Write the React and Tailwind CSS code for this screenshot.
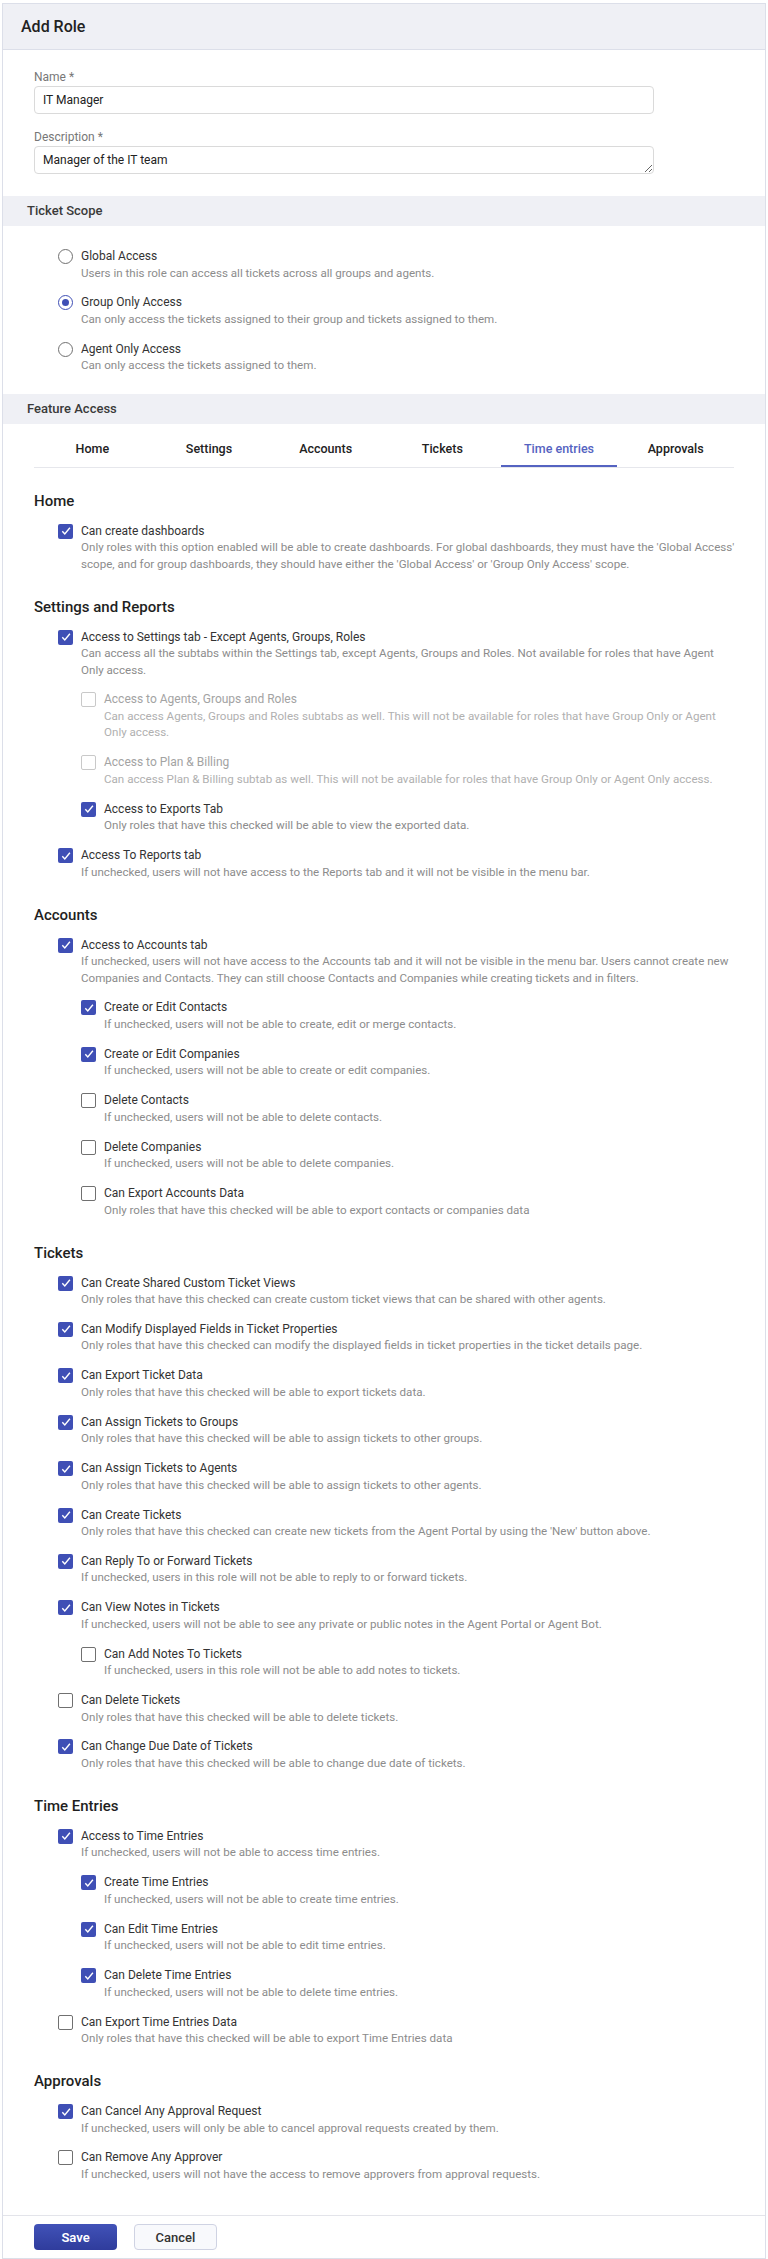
import { useState } from "react";

const tabs = ["Home", "Settings", "Accounts", "Tickets", "Time entries", "Approvals"];

const scopes = [
  {
    id: "global",
    label: "Global Access",
    desc: "Users in this role can access all tickets across all groups and agents.",
  },
  {
    id: "group",
    label: "Group Only Access",
    desc: "Can only access the tickets assigned to their group and tickets assigned to them.",
  },
  {
    id: "agent",
    label: "Agent Only Access",
    desc: "Can only access the tickets assigned to them.",
  },
];

const sections = [
  {
    title: "Home",
    items: [
      {
        label: "Can create dashboards",
        desc: "Only roles with this option enabled will be able to create dashboards. For global dashboards, they must have the 'Global Access' scope, and for group dashboards, they should have either the 'Global Access' or 'Group Only Access' scope.",
        checked: true,
      },
    ],
  },
  {
    title: "Settings and Reports",
    items: [
      {
        label: "Access to Settings tab - Except Agents, Groups, Roles",
        desc: "Can access all the subtabs within the Settings tab, except Agents, Groups and Roles. Not available for roles that have Agent Only access.",
        checked: true,
        children: [
          {
            label: "Access to Agents, Groups and Roles",
            desc: "Can access Agents, Groups and Roles subtabs as well. This will not be available for roles that have Group Only or Agent Only access.",
            disabled: true,
          },
          {
            label: "Access to Plan & Billing",
            desc: "Can access Plan & Billing subtab as well. This will not be available for roles that have Group Only or Agent Only access.",
            disabled: true,
          },
          {
            label: "Access to Exports Tab",
            desc: "Only roles that have this checked will be able to view the exported data.",
            checked: true,
          },
        ],
      },
      {
        label: "Access To Reports tab",
        desc: "If unchecked, users will not have access to the Reports tab and it will not be visible in the menu bar.",
        checked: true,
      },
    ],
  },
  {
    title: "Accounts",
    items: [
      {
        label: "Access to Accounts tab",
        desc: "If unchecked, users will not have access to the Accounts tab and it will not be visible in the menu bar. Users cannot create new Companies and Contacts. They can still choose Contacts and Companies while creating tickets and in filters.",
        checked: true,
        children: [
          {
            label: "Create or Edit Contacts",
            desc: "If unchecked, users will not be able to create, edit or merge contacts.",
            checked: true,
          },
          {
            label: "Create or Edit Companies",
            desc: "If unchecked, users will not be able to create or edit companies.",
            checked: true,
          },
          {
            label: "Delete Contacts",
            desc: "If unchecked, users will not be able to delete contacts.",
          },
          {
            label: "Delete Companies",
            desc: "If unchecked, users will not be able to delete companies.",
          },
          {
            label: "Can Export Accounts Data",
            desc: "Only roles that have this checked will be able to export contacts or companies data",
          },
        ],
      },
    ],
  },
  {
    title: "Tickets",
    items: [
      {
        label: "Can Create Shared Custom Ticket Views",
        desc: "Only roles that have this checked can create custom ticket views that can be shared with other agents.",
        checked: true,
      },
      {
        label: "Can Modify Displayed Fields in Ticket Properties",
        desc: "Only roles that have this checked can modify the displayed fields in ticket properties in the ticket details page.",
        checked: true,
      },
      {
        label: "Can Export Ticket Data",
        desc: "Only roles that have this checked will be able to export tickets data.",
        checked: true,
      },
      {
        label: "Can Assign Tickets to Groups",
        desc: "Only roles that have this checked will be able to assign tickets to other groups.",
        checked: true,
      },
      {
        label: "Can Assign Tickets to Agents",
        desc: "Only roles that have this checked will be able to assign tickets to other agents.",
        checked: true,
      },
      {
        label: "Can Create Tickets",
        desc: "Only roles that have this checked can create new tickets from the Agent Portal by using the 'New' button above.",
        checked: true,
      },
      {
        label: "Can Reply To or Forward Tickets",
        desc: "If unchecked, users in this role will not be able to reply to or forward tickets.",
        checked: true,
      },
      {
        label: "Can View Notes in Tickets",
        desc: "If unchecked, users will not be able to see any private or public notes in the Agent Portal or Agent Bot.",
        checked: true,
        children: [
          {
            label: "Can Add Notes To Tickets",
            desc: "If unchecked, users in this role will not be able to add notes to tickets.",
          },
        ],
      },
      {
        label: "Can Delete Tickets",
        desc: "Only roles that have this checked will be able to delete tickets.",
      },
      {
        label: "Can Change Due Date of Tickets",
        desc: "Only roles that have this checked will be able to change due date of tickets.",
        checked: true,
      },
    ],
  },
  {
    title: "Time Entries",
    items: [
      {
        label: "Access to Time Entries",
        desc: "If unchecked, users will not be able to access time entries.",
        checked: true,
        children: [
          {
            label: "Create Time Entries",
            desc: "If unchecked, users will not be able to create time entries.",
            checked: true,
          },
          {
            label: "Can Edit Time Entries",
            desc: "If unchecked, users will not be able to edit time entries.",
            checked: true,
          },
          {
            label: "Can Delete Time Entries",
            desc: "If unchecked, users will not be able to delete time entries.",
            checked: true,
          },
        ],
      },
      {
        label: "Can Export Time Entries Data",
        desc: "Only roles that have this checked will be able to export Time Entries data",
      },
    ],
  },
  {
    title: "Approvals",
    items: [
      {
        label: "Can Cancel Any Approval Request",
        desc: "If unchecked, users will only be able to cancel approval requests created by them.",
        checked: true,
      },
      {
        label: "Can Remove Any Approver",
        desc: "If unchecked, users will not have the access to remove approvers from approval requests.",
      },
    ],
  },
];

const CheckBox = ({ checked, disabled }) => (
  <span
    className={`mt-[1px] flex h-[15px] w-[15px] shrink-0 items-center justify-center rounded-[2px] ${
      checked
        ? "bg-[#3f4fb5]"
        : disabled
        ? "border-[1.5px] border-[#c9c9c9] bg-white"
        : "border-[1.5px] border-[#707070] bg-white"
    }`}
  >
    {checked && (
      <svg viewBox="0 0 12 12" className="h-[12px] w-[12px]">
        <path
          d="M2.3 6.2 L4.8 8.9 L9.9 2.8"
          fill="none"
          stroke="#ffffff"
          strokeWidth="1.4"
        />
      </svg>
    )}
  </span>
);

const Radio = ({ checked }) => (
  <span
    className={`mt-[1px] flex h-[15px] w-[15px] shrink-0 items-center justify-center rounded-full border-[1.5px] bg-white ${
      checked ? "border-[#3f4fb5]" : "border-[#707070]"
    }`}
  >
    {checked && <span className="h-[7px] w-[7px] rounded-full bg-[#3f4fb5]" />}
  </span>
);

const PermItem = ({ item }) => (
  <div className="flex gap-[8px]">
    <CheckBox checked={item.checked} disabled={item.disabled} />
    <div className="min-w-0 flex-1">
      <p
        className={`text-[12px] leading-[16.5px] ${
          item.disabled ? "text-[#a3a3a3]" : "text-[#333333]"
        }`}
      >
        {item.label}
      </p>
      <p
        className={`text-[11.6px] leading-[16.5px] ${
          item.disabled ? "text-[#b0b0b0]" : "text-[#8c8c8c]"
        }`}
      >
        {item.desc}
      </p>
      {item.children && (
        <div className="mt-[13.4px] flex flex-col gap-[13.4px]">
          {item.children.map((child) => (
            <PermItem key={child.label} item={child} />
          ))}
        </div>
      )}
    </div>
  </div>
);

const Band = ({ title }) => (
  <div className="flex h-[30px] items-center bg-[#eff0f5] px-[24px] text-[13px] font-medium text-[#3a3a3a]">
    {title}
  </div>
);

export default function App() {
  const [scope, setScope] = useState("group");
  const [tab] = useState("Time entries");

  return (
    <div
      className="min-h-screen bg-white pt-[3px]"
      style={{ fontFamily: "Roboto, 'Noto Sans', sans-serif" }}
    >
      <div className="mx-[2px] border border-[#dcdfe9]">
        <div className="flex h-[46px] items-center border-b border-[#dcdfe9] bg-[#eff0f5] px-[18px]">
          <h1 className="text-[16px] font-medium text-[#222222]">Add Role</h1>
        </div>

        <div className="px-[31px] pb-[22px] pt-[19px]">
          <div className="w-[620px]">
            <label className="mb-[1px] block text-[12px] leading-[16px] text-[#777777]">
              Name *
            </label>
            <input
              defaultValue="IT Manager"
              className="block h-[28px] w-full rounded-[4px] border border-[#dadada] px-[8px] text-[12px] text-[#222222] outline-none"
            />
            <label className="mb-[1px] mt-[15px] block text-[12px] leading-[16px] text-[#777777]">
              Description *
            </label>
            <textarea
              rows={1}
              defaultValue="Manager of the IT team"
              className="block h-[28px] w-full resize-y rounded-[4px] border border-[#dadada] px-[8px] py-[5px] text-[12px] leading-[16px] text-[#222222] outline-none"
            />
          </div>
        </div>

        <Band title="Ticket Scope" />

        <div className="flex flex-col gap-[13.4px] pb-[20px] pl-[55px] pr-[30px] pt-[22px]">
          {scopes.map((s) => (
            <label
              key={s.id}
              className="flex cursor-pointer gap-[8px]"
              onClick={() => setScope(s.id)}
            >
              <Radio checked={scope === s.id} />
              <div>
                <p className="text-[12px] leading-[16.5px] text-[#333333]">{s.label}</p>
                <p className="text-[11.6px] leading-[16.5px] text-[#8c8c8c]">{s.desc}</p>
              </div>
            </label>
          ))}
        </div>

        <Band title="Feature Access" />

        <div className="pb-[33px] pl-[31px] pr-[30px]">
          <div className="mr-[1px] mt-[17px] grid grid-cols-6 border-b border-[#e6e7ec]">
            {tabs.map((t) => (
              <button
                key={t}
                className={`border-b-2 pb-[8px] text-[12.5px] font-medium leading-[16px] ${
                  t === tab
                    ? "border-[#5563c1] text-[#5563c1]"
                    : "border-transparent text-[#222222]"
                }`}
              >
                {t}
              </button>
            ))}
          </div>

          {sections.map((sec, i) => (
            <section key={sec.title} className={i === 0 ? "mt-[23px]" : "mt-[24.75px]"}>
              <h2 className="text-[15px] font-medium leading-[20px] text-[#1f1f1f]">
                {sec.title}
              </h2>
              <div className="mt-[11.75px] flex flex-col gap-[13.4px] pl-[24px]">
                {sec.items.map((item) => (
                  <PermItem key={item.label} item={item} />
                ))}
              </div>
            </section>
          ))}
        </div>

        <div className="flex gap-[17px] border-t border-[#e3e4ea] px-[31px] pb-[8px] pt-[8px]">
          <button className="h-[26px] w-[83px] rounded-[4px] bg-gradient-to-b from-[#4152b8] to-[#2f3c9c] text-[13px] font-semibold text-white">
            Save
          </button>
          <button className="h-[26px] w-[83px] rounded-[4px] border border-[#cfd3e3] bg-[#f8f9fc] text-[13px] font-medium text-[#333333]">
            Cancel
          </button>
        </div>
      </div>
    </div>
  );
}
